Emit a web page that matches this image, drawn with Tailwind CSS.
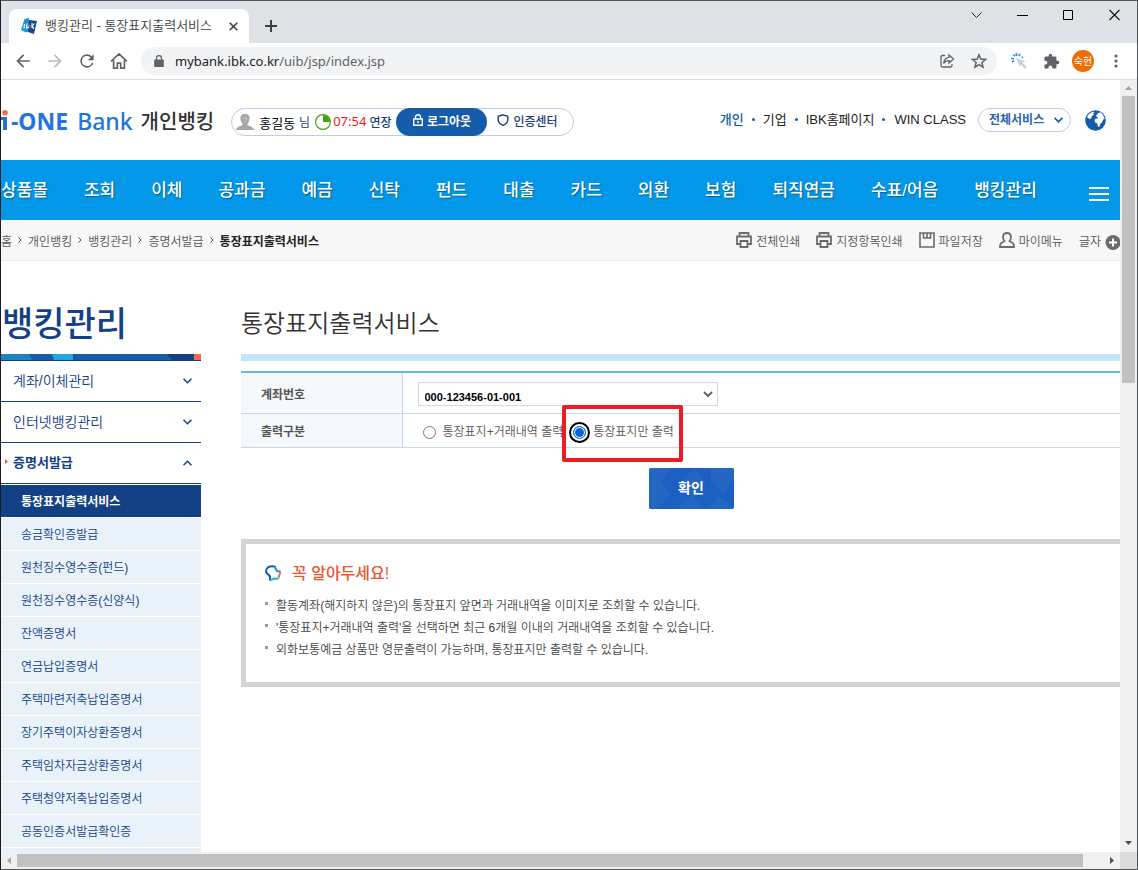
<!DOCTYPE html>
<html lang="ko">
<head>
    <meta charset="UTF-8">
    <meta name="viewport" content="width=device-width, initial-scale=1.0">
    <title>뱅킹관리 - 통장표지출력서비스</title>
    <script src="https://cdn.jsdelivr.net/npm/@tailwindcss/browser@4"></script>
</head>
<body class="h-screen flex flex-col overflow-hidden bg-white border border-[#55565a] border-l-[#1c1c20] font-['Liberation_Sans','Noto_Sans_CJK_KR',sans-serif] text-xs text-[#555]">

    <!-- Tab strip -->
    <div class="h-[42px] shrink-0 flex items-start bg-[#dee1e6]">
        <div class="ml-2 mt-2 h-[34px] w-60 flex items-center rounded-t-lg bg-white pl-3 pr-2">
            <svg class="w-4 h-4 shrink-0" viewBox="0 0 16 16">
                <path d="M3.500 1L8 0l1 13-4 1.500L0 12z" fill="#1c94d2"/>
                <path d="M8 2l8 1-3 13-6-2z" fill="#124a94"/>
                <path d="M3.500 6L3 10.500M6 5.500L5.500 10l2-.5.5-2M11 5v5M13.500 5.500L11.500 8l1.300 3" stroke="#fff" stroke-width="1.100" fill="none"/>
                <circle cx="8.500" cy="8" r="1.300" fill="#ee4136"/>
            </svg>
            <span class="ml-2 flex-1 overflow-hidden whitespace-nowrap text-[13px] font-[350] text-[#3c4043]">뱅킹관리 - 통장표지출력서비스</span>
            <button class="w-4 h-4 flex items-center justify-center" aria-label="탭 닫기">
                <svg class="w-[9px] h-[9px]" viewBox="0 0 9 9" fill="none" stroke="#3c4043" stroke-width="1.600"><path d="M.7.7l7.600 7.600M8.300.7L.7 8.300"/></svg>
            </button>
        </div>
        <button class="ml-4 mt-[19px] w-3 h-3" aria-label="새 탭">
            <svg viewBox="0 0 12 12" fill="none" stroke="#3c4043" stroke-width="2"><path d="M6 0v12M0 6h12"/></svg>
        </button>
        <div class="ml-auto mr-[17px] mt-2 flex items-center gap-[35px]">
            <button aria-label="탭 검색"><svg class="w-[11px] h-3" viewBox="0 0 11 12" fill="none" stroke="#222"><path d="M.5 3.500l5 5 5-5"/></svg></button>
            <button aria-label="최소화"><svg class="w-[11px] h-3" viewBox="0 0 11 12" fill="none" stroke="#000"><path d="M0 6.500h11"/></svg></button>
            <button aria-label="최대화"><svg class="w-[11px] h-3" viewBox="0 0 11 12" fill="none" stroke="#000"><path d="M.5 1.500h9v9h-9z"/></svg></button>
            <button aria-label="닫기"><svg class="w-[11px] h-3" viewBox="0 0 11 12" fill="none" stroke="#111" stroke-width="1.100"><path d="M.5 1l10 10M10.500 1l-10 10"/></svg></button>
        </div>
    </div>

    <!-- Toolbar -->
    <div class="h-[37px] shrink-0 flex items-center border-b border-[#dadce0] bg-white pl-3 pr-[14px]">
        <div class="flex items-center gap-3 text-[#5f6368]">
            <button aria-label="뒤로"><svg class="w-5 h-5" viewBox="0 0 24 24" fill="currentColor"><path d="M20 11H7.830l5.590-5.590L12 4l-8 8 8 8 1.410-1.410L7.830 13H20z"/></svg></button>
            <button aria-label="앞으로" class="text-[#b9bbbe]"><svg class="w-5 h-5" viewBox="0 0 24 24" fill="currentColor"><path d="M12 4l-1.410 1.410L16.170 11H4v2h12.170l-5.580 5.590L12 20l8-8z"/></svg></button>
            <button aria-label="새로고침"><svg class="w-5 h-5" viewBox="0 0 24 24" fill="currentColor"><path d="M17.650 6.350A8 8 0 1 0 19.730 14h-2.080A6 6 0 1 1 12 6c1.660 0 3.140.69 4.220 1.780L13 11h7V4z"/></svg></button>
            <button aria-label="홈"><svg class="w-5 h-5" viewBox="0 0 24 24" fill="none" stroke="currentColor" stroke-width="2"><path d="M2.500 12.500L12 3.500l9.500 9M5.500 11v9.500h4.500v-6h4v6h4.500V11"/></svg></button>
        </div>
        <div class="ml-3 h-7 flex-1 flex items-center rounded-full bg-[#f1f3f4] pl-3 pr-[10px] text-[#5f6368]">
            <svg class="w-3 h-3" viewBox="0 0 12 12" fill="#5f6368"><path d="M2 4.500h8q.8 0 .8.800v5.900q0 .8-.8.800H2q-.8 0-.8-.8V5.300q0-.8.800-.8z"/><path d="M3.500 5V3a2.500 2.500 0 0 1 5 0v2" fill="none" stroke="#5f6368" stroke-width="1.300"/></svg>
            <div role="textbox" aria-label="주소" class="ml-[10px] flex-1 font-['Noto_Sans',sans-serif] text-[13px] leading-5"><span class="text-[#202124]">mybank.ibk.co.kr</span>/uib/jsp/index.jsp</div>
            <button aria-label="공유"><svg class="w-4 h-4" viewBox="0 0 16 16" fill="none" stroke="currentColor" stroke-width="1.300"><path d="M6 2.500H3.500q-1.500 0-1.500 1.500v8.500Q2 14 3.500 14h8q1.500 0 1.500-1.500V11M10 2l4.500 4L10 10V7.700Q6.500 7.500 4.700 10.500 5 5 10 4.300z"/></svg></button>
            <button class="ml-4" aria-label="북마크"><svg class="w-4 h-4" viewBox="0 0 16 16" fill="none" stroke="currentColor" stroke-width="1.500"><path d="M8 1.800l1.800 4.300 4.700.4-3.600 3 1.100 4.600L8 11.600l-4 2.500 1.100-4.600-3.600-3 4.700-.4z"/></svg></button>
        </div>
        <div class="ml-[14px] mr-[5px] flex items-center">
            <svg class="w-4 h-4" viewBox="0 0 16 16"><path d="M5.500 0v3M2.500 1.500l1.300 1.800M0 5.500h3M1 9l2-1.200M9 1L7.800 3M10.500 4.500L12 4" stroke="#2196f3" stroke-width="1.700"/><path d="M5 5l9.500 3.500-4 1.500-1.500 4z" fill="#c8cfe4"/><path d="M10 10l5 5" stroke="#c0c8de" stroke-width="1.800"/></svg>
            <svg class="ml-4 w-[17px] h-[17px]" viewBox="0 0 24 24" fill="#5f6368"><path d="M20.500 11H19V7a2 2 0 0 0-2-2h-4V3.500a2.500 2.500 0 0 0-5 0V5H4a2 2 0 0 0-2 2v3.800h1.500a2.700 2.700 0 0 1 0 5.400H2V20a2 2 0 0 0 2 2h3.800v-1.500a2.700 2.700 0 0 1 5.400 0V22H17a2 2 0 0 0 2-2v-4h1.500a2.500 2.500 0 0 0 0-5z"/></svg>
            <button class="ml-[12px] w-[22px] h-[22px] rounded-full bg-[#ef6c00] text-center text-[10px] leading-[21px] text-white">숙현</button>
            <button class="ml-5" aria-label="메뉴"><svg class="w-1 h-4" viewBox="0 0 4 16" fill="#5f6368"><circle cx="2" cy="3" r="1.600"/><circle cx="2" cy="8" r="1.600"/><circle cx="2" cy="13" r="1.600"/></svg></button>
        </div>
    </div>

    <div class="flex-1 min-h-0 flex">
        <div class="flex-1 min-w-0 overflow-hidden">

            <!-- Bank header -->
            <header class="h-20 flex items-center pr-[14px] whitespace-nowrap">
                <a href="#" class="flex items-center font-['Noto_Sans','Noto_Sans_CJK_KR',sans-serif] text-[#2374e1]">
                    <svg class="w-[7px] h-5" viewBox="0 0 7 20"><circle cx="4" cy="2.800" r="2.800" fill="#f26a4b"/><path d="M0 7h6v13H2V10H0z" fill="#2374e1"/></svg>
                    <span class="ml-[3px] mt-px text-[23px] leading-8 font-bold">-ONE <span class="ml-[3px] font-medium">Bank</span></span>
                    <span class="ml-2 mt-1 text-xl leading-8 font-medium text-[#333]">개인뱅킹</span>
                </a>
                <div class="ml-[17px] mt-1 h-7 flex items-center rounded-full border border-[#bccde6] text-[#1b3f77]">
                    <svg class="ml-1 w-[18px] h-[18px]" viewBox="0 0 18 18" fill="#a6a6a6"><path d="M9 1c3.500 0 5 2 4.500 5-.2 2-1 3.500-2 4.500v1.800c2 1 6 1.200 6.500 4.700H0c.5-3.500 4.500-3.700 6.500-4.700v-1.800c-1-1-1.800-2.500-2-4.500C4 3 5.500 1 9 1z"/><path d="M7.500 6q0-1.500 1.500-1.500T10.500 6 9 8v1.500" fill="none" stroke="#ccc"/></svg>
                    <span class="ml-[5px] mt-1 text-[13px] text-black">홍길동</span>
                    <span class="ml-1 mt-px">님</span>
                    <svg class="ml-[5px] w-4 h-4" viewBox="0 0 16 16"><circle cx="8" cy="8" r="7.400" fill="#fff" stroke="#43a312" stroke-width="1.200"/><path d="M8 8V1a7 7 0 0 1 7 7z" fill="#43a312"/></svg>
                    <span class="ml-[2px] font-['Noto_Sans',sans-serif] text-[13px] text-[#f5171d]">07:54</span>
                    <button class="ml-[3px] mt-px font-medium">연장</button>
                    <button class="ml-[5px] h-7 w-[91px] flex items-center justify-center gap-1 rounded-full bg-[#155cab] text-xs font-bold text-white">
                        <svg class="mb-1 w-[10px] h-3" viewBox="0 0 10 12" fill="none" stroke="#fff" stroke-width="1.400"><path d="M.7 5h8.600v6.300H.7zM2.500 5V3a2.500 2.300 0 0 1 5 0v2M5 7v2.300"/></svg>
                        로그아웃
                    </button>
                    <a href="#" class="ml-[10px] mr-[15px] flex items-center gap-1 font-medium">
                        <svg class="mb-1 w-3 h-3" viewBox="0 0 12 12" fill="none" stroke="#1b3f77" stroke-width="1.400"><path d="M6 .8l4.800 1.500v4Q10.500 9.500 6 11.300 1.500 9.500 1.200 6.300v-4z"/></svg>
                        인증센터
                    </a>
                </div>
                <nav class="ml-auto flex items-center gap-[9px] text-[13px] text-[#222]">
                    <a href="#" class="-mr-px font-medium text-[#155cab]">개인</a>
                    <i class="w-[3px] h-[3px] rounded-full bg-[#155cab]"></i>
                    <a href="#" class="-mx-px">기업</a>
                    <i class="w-[3px] h-[3px] rounded-full bg-[#155cab]"></i>
                    <a href="#" class="-mx-px">IBK홈페이지</a>
                    <i class="w-[3px] h-[3px] rounded-full bg-[#155cab]"></i>
                    <a href="#">WIN CLASS</a>
                </nav>
                <button class="ml-3 h-6 w-[93px] flex items-center justify-between rounded-full border border-[#bccde6] pl-[10px] pr-[7px] font-bold text-[#2b62ad]">
                    전체서비스
                    <svg class="w-[9px] h-[6px]" viewBox="0 0 9 6" fill="none" stroke="#155cab" stroke-width="1.700"><path d="M.6.8l3.900 4L8.400.8"/></svg>
                </button>
                <button class="ml-[14px]" aria-label="언어 선택">
                    <svg class="w-[21px] h-[21px]" viewBox="0 0 21 21"><circle cx="10.500" cy="10.500" r="10.300" fill="#155cab"/><path d="M2 7Q4 3 8 1.500l1.500.8-1.500 1 1 1.200-2 1.500L6 8.500 4.500 9l-1.500-1zM11 6l1.500-2.500 3-1.200Q19 5 19.800 9l-1.500.5-1.300 3-1.500 1-1 3-1.500.5-.8-3.800-2.200-.7-.5-2.500 1.500-1.500 1.500.2.500-1z" fill="#fff"/></svg>
                </button>
            </header>

            <!-- Main menu -->
            <div class="h-[60px] flex items-center bg-[#0297e8] pr-[11px] text-white">
                <nav id="main-menu" class="mt-[2px] flex gap-9 whitespace-nowrap text-[17px] leading-6 font-medium [text-shadow:1px_1px_1px_#0005]"></nav>
                <button class="ml-auto mt-2 flex flex-col gap-1" aria-label="전체메뉴">
                    <span class="w-5 h-[2px] bg-white"></span>
                    <span class="w-5 h-[2px] bg-white"></span>
                    <span class="w-5 h-[2px] bg-white"></span>
                </button>
            </div>

            <!-- Breadcrumb and page tools -->
            <div class="h-[41px] flex items-center justify-between border-b border-[#ebebeb] bg-[#f7f7f7] pt-1 whitespace-nowrap text-[#555]">
                <nav id="breadcrumb" class="flex items-center gap-[6px] font-[350]"></nav>
                <div class="flex items-center gap-4">
                    <button class="flex items-center gap-1 font-[350]">
                        <svg class="mb-1 w-4 h-4" viewBox="0 0 16 16" fill="none" stroke="#6b6b6b" stroke-width="1.800"><path d="M3.500 4V1h9v3M3.500 12H1V4.500h14V12h-2.500M4.500 9h7v6h-7z"/></svg>
                        전체인쇄
                    </button>
                    <button class="flex items-center gap-1 font-[350]">
                        <svg class="mb-1 w-4 h-4" viewBox="0 0 16 16" fill="none" stroke="#6b6b6b" stroke-width="1.800"><path d="M3.500 4V1h9v3M3.500 12H1V4.500h14V12h-2.500M4.500 9h7v6h-7z"/></svg>
                        지정항목인쇄
                    </button>
                    <button class="flex items-center gap-1 font-[350]">
                        <svg class="mb-1 w-4 h-4" viewBox="0 0 16 16" fill="none" stroke="#6b6b6b" stroke-width="1.600"><path d="M1 1h14v14H1zM4.500 1v5h7V1M8 1v5"/></svg>
                        파일저장
                    </button>
                    <button class="flex items-center gap-1 font-[350]">
                        <svg class="mb-1 w-4 h-4" viewBox="0 0 16 16" fill="none" stroke="#6b6b6b" stroke-width="1.800"><path d="M5.500 9Q3.800 7 4 4.500 4.500 1 8 1t4 3.500Q12.200 7 10.500 9L12 10q3 1 3 5H1q0-4 3-5z"/></svg>
                        마이메뉴
                    </button>
                    <button class="flex items-center gap-1 font-[350]">
                        글자
                        <svg class="w-[15px] h-4" viewBox="0 0 15 16"><circle cx="8" cy="8.500" r="7.500" fill="#6b6b6b"/><path d="M8 4.500v8M4 8.500h8" stroke="#fff" stroke-width="2"/></svg>
                    </button>
                </div>
            </div>

            <div class="flex gap-10">
                <!-- Side menu -->
                <aside class="w-[200px] shrink-0 pt-[38px] text-[#144085]">
                    <h2 class="h-[55px] pl-px text-[34px] leading-[51px] font-medium">뱅킹관리</h2>
                    <svg class="block h-[6px] w-full" viewBox="0 0 200 6" preserveAspectRatio="none"><path d="M0 0h200v6H0z" fill="#155cab"/><path d="M0 0h28l3 6H0z" fill="#1b82c5"/><path d="M51 0h21v6H53z" fill="#1fa5e0"/><path d="M166 0h28v6h-23z" fill="#144085"/><path d="M193 0h7v6h-7z" fill="#f26a4b"/></svg>
                    <ul class="border-t border-[#144085] text-sm">
                        <li class="border-b border-[#144085]"><a href="#" class="h-10 flex items-center justify-between pl-3 pr-[9px] font-[350]">계좌/이체관리
                            <svg class="w-[9px] h-[6px]" viewBox="0 0 9 6" fill="none" stroke="currentColor" stroke-width="1.500"><path d="M.5.8l4 4 4-4"/></svg></a></li>
                        <li class="border-b border-[#144085]"><a href="#" class="h-10 flex items-center justify-between pl-3 pr-[9px] font-[350]">인터넷뱅킹관리
                            <svg class="w-[9px] h-[6px]" viewBox="0 0 9 6" fill="none" stroke="currentColor" stroke-width="1.500"><path d="M.5.8l4 4 4-4"/></svg></a></li>
                        <li class="border-b border-[#144085]"><a href="#" class="h-10 flex items-center pl-1 pr-[9px] text-[13px] font-bold">
                            <svg class="mr-[5px] mb-1 w-[3px] h-[5px]" viewBox="0 0 3 5" fill="#ee5a36"><path d="M0 0l3 2.500L0 5z"/></svg>증명서발급
                            <svg class="ml-auto w-[9px] h-[6px]" viewBox="0 0 9 6" fill="none" stroke="currentColor" stroke-width="1.500"><path d="M.5 5.200l4-4 4 4"/></svg></a></li>
                    </ul>
                    <ul id="sub-menu" class="mt-px"></ul>
                </aside>

                <!-- Content -->
                <main class="w-[900px] shrink-0 pt-[43px]">
                    <h1 class="text-2xl leading-10 font-[350] text-[#333]">통장표지출력서비스</h1>
                    <div class="mt-[10px] h-[7px] bg-[#c3e6f7]"></div>

                    <form class="mt-[10px]" onsubmit="return false">
                        <table class="w-full border-t-2 border-[#63b7ea]">
                            <tbody>
                                <tr class="h-[41px] border-b border-[#c8d9e6]">
                                    <th scope="row" class="w-[161px] border-r border-[#c8d9e6] bg-[#f5f9fd] pl-5 pt-1 text-left font-bold"><label for="account">계좌번호</label></th>
                                    <td class="pl-[15px]">
                                        <div class="relative w-[300px] h-6 mt-[2px]">
                                            <select id="account" class="w-full h-full appearance-none border border-[#d9d9d9] bg-white pt-[7px] pl-[6px] text-[11px] font-bold text-black">
                                                <option>000-123456-01-001</option>
                                            </select>
                                            <svg class="absolute right-[5px] top-[9px] w-[10px] h-[7px] pointer-events-none" viewBox="0 0 10 7" fill="none" stroke="#666" stroke-width="2"><path d="M1 1l4 4 4-4"/></svg>
                                        </div>
                                    </td>
                                </tr>
                                <tr class="h-[34px] border-b border-[#c8d9e6]">
                                    <th scope="row" class="border-r border-[#c8d9e6] bg-[#f5f9fd] pl-5 pt-1 text-left font-bold">출력구분</th>
                                    <td class="pl-5 pt-1">
                                        <div class="flex items-center whitespace-nowrap font-[350]">
                                            <label class="flex items-center"><input type="radio" name="print" class="mr-[7px] w-[13px] h-[13px]">통장표지+거래내역 출력</label>
                                            <label class="relative ml-[10px] flex items-center">
                                                <input type="radio" name="print" checked class="mr-[7px] w-[13px] h-[13px] appearance-none rounded-full border border-[#0b62d6] bg-[#0b62d6] shadow-[inset_0_0_0_1px_white] outline-2 outline-offset-2 outline-black">통장표지만 출력
                                                <span class="absolute -left-[11px] -right-[9px] -top-[19px] -bottom-[22px] rounded-xs border-4 border-[#ed1c24]"></span>
                                            </label>
                                        </div>
                                    </td>
                                </tr>
                            </tbody>
                        </table>
                        <button class="relative mx-auto mt-5 block h-[41px] w-[85px] overflow-hidden rounded-xs bg-[#1c5fc2] text-sm font-bold text-white">
                            <svg class="absolute inset-0 w-full h-full" viewBox="0 0 85 41"><path d="M0 0h22L12 14l10 12L8 41H0zM45 0l12 14-12 16-13-16zM28 41l14-14 15 14zM62 0h23v12L74 26 62 12zM57 41l13-13 15 13z" fill="#2466c2"/></svg>
                            <span class="relative">확인</span>
                        </button>
                    </form>

                    <section class="mt-[30px] h-[148px] border-[5px] border-[#d4d4d4] pl-[19px] pt-4">
                        <h3 class="flex items-center leading-7 font-medium text-[#ea5530]">
                            <svg class="mr-[10px] w-[17px] h-[17px]" viewBox="0 0 17 17" fill="none" stroke-width="2"><path d="M10.500 2Q7 .3 3.500 2 .3 4 1.300 7.500L5.500 12" stroke="#155cab"/><path d="M5 11.500v4" stroke="#155cab"/><path d="M9.500 1.500L12 6l3.500.5" stroke="#1b94d8"/><path d="M15.500 6.500L13.500 13" stroke="#f26a4b"/><path d="M5 15.300l4-1.800 4.500.2" stroke="#1fb3d8"/></svg>
                            <span class="text-base leading-7">꼭 알아두세요!</span>
                        </h3>
                        <ul id="notices" class="mt-[7px] leading-[22px] font-[350] text-[#444]"></ul>
                    </section>
                </main>
            </div>
        </div>

        <!-- Vertical scrollbar -->
        <div class="w-[17px] shrink-0 flex flex-col items-center bg-[#f0f0f0]">
            <svg class="my-[6px] w-[7px] h-1 shrink-0" viewBox="0 0 7 4" fill="#a3a3a3"><path d="M3.500 0L7 4H0z"/></svg>
            <div class="w-[13px] h-[287px] bg-[#c1c1c1]"></div>
            <svg class="mt-auto mb-[7px] w-[7px] h-1" viewBox="0 0 7 4" fill="#505050"><path d="M0 0h7L3.500 4z"/></svg>
        </div>
    </div>

    <!-- Horizontal scrollbar -->
    <div class="h-[17px] shrink-0 flex items-center bg-[#f0f0f0]">
        <svg class="mx-[6px] w-1 h-[7px]" viewBox="0 0 4 7" fill="#a3a3a3"><path d="M4 0v7L0 3.500z"/></svg>
        <div class="h-[13px] flex-1 bg-[#c1c1c1]"></div>
        <svg class="ml-[27px] mr-[6px] w-1 h-[7px]" viewBox="0 0 4 7" fill="#505050"><path d="M0 0v7l4-3.500z"/></svg>
        <div class="w-[17px] h-full bg-[#dcdcdc]"></div>
    </div>

    <script>
        const menus = ['상품몰', '조회', '이체', '공과금', '예금', '신탁', '펀드', '대출', '카드', '외환', '보험', '퇴직연금', '수표/어음', '뱅킹관리'];
        const crumbs = ['홈', '개인뱅킹', '뱅킹관리', '증명서발급', '통장표지출력서비스'];
        const subMenus = ['통장표지출력서비스', '송금확인증발급', '원천징수영수증(펀드)', '원천징수영수증(신양식)', '잔액증명서', '연금납입증명서', '주택마련저축납입증명서', '장기주택이자상환증명서', '주택임차자금상환증명서', '주택청약저축납입증명서', '공동인증서발급확인증', ''];
        const notices = [
            '활동계좌(해지하지 않은)의 통장표지 앞면과 거래내역을 이미지로 조회할 수 있습니다.',
            "'통장표지+거래내역 출력'을 선택하면 최근 6개월 이내의 거래내역을 조회할 수 있습니다.",
            '외화보통예금 상품만 영문출력이 가능하며, 통장표지만 출력할 수 있습니다.'
        ];

        document.getElementById('main-menu').innerHTML = menus.map(menu => `<a href="#">${menu}</a>`).join('');

        const arrow = '<svg class="mb-1 w-[4px] h-[6px]" viewBox="0 0 4 6" fill="none" stroke="#555"><path d="M.5.5L3 3 .5 5.500"/></svg>';
        document.getElementById('breadcrumb').innerHTML = crumbs.map((crumb, i) =>
            i === crumbs.length - 1 ? `<strong class="font-bold text-[#222]">${crumb}</strong>` : `<a href="#">${crumb}</a>`
        ).join(arrow);

        document.getElementById('sub-menu').innerHTML = subMenus.map((menu, i) => `
            <li class="border-b border-white">
                <a href="#" class="${i === 0 ? 'bg-[#144085] font-bold text-white' : 'bg-[#e9f2f9] font-[350]'} block h-8 pl-5 leading-[34px]">${menu}</a>
            </li>
        `).join('');

        document.getElementById('notices').innerHTML = notices.map(notice => `
            <li class="flex items-center">
                <span class="mr-2 mb-1 w-[3px] h-[3px] bg-[#999]"></span>${notice}
            </li>
        `).join('');
    </script>
</body>
</html>
